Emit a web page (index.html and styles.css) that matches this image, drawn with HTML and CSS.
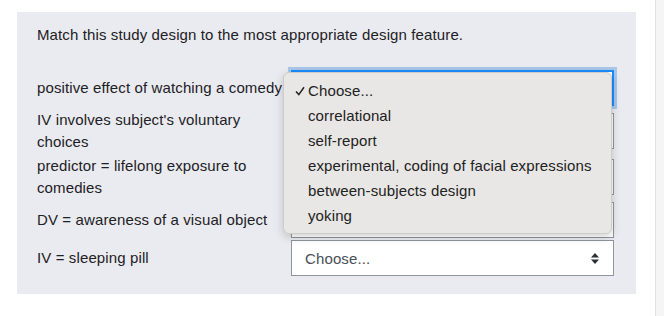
FILE: index.html
```html
<!DOCTYPE html>
<html>
<head>
    <title>Match question</title>
    <link rel="stylesheet" href="styles.css">
</head>
<body>
    <div class="page">
        <div class="content">
            <div class="formulation">
                <p class="prompt">Match this study design to the most appropriate design feature.</p>
                <div class="answers">
                    <div class="stem">positive effect of watching a comedy</div>
                    <div class="control">
                        <div class="select focused">
                            <span>Choose...</span>
                        </div>
                        <!-- open menu -->
                        <ul class="menu">
                            <li class="checked">
                                <svg class="tick" width="10" height="10" viewBox="0 0 10 10">
                                    <path d="M1 5.6 L3.8 8.6 L9 1.2" fill="none" stroke="#222" stroke-width="1.5"/>
                                </svg>Choose...</li>
                            <li>correlational</li>
                            <li>self-report</li>
                            <li>experimental, coding of facial expressions</li>
                            <li>between-subjects design</li>
                            <li>yoking</li>
                        </ul>
                    </div>

                    <div class="stem">IV involves subject's voluntary choices</div>
                    <div class="control">
                        <div class="select"><span>Choose...</span></div>
                    </div>

                    <div class="stem">predictor = lifelong exposure to comedies</div>
                    <div class="control">
                        <div class="select"><span>Choose...</span></div>
                    </div>

                    <div class="stem">DV = awareness of a visual object</div>
                    <div class="control">
                        <div class="select"><span>Choose...</span></div>
                    </div>

                    <div class="stem">IV = sleeping pill</div>
                    <div class="control">
                        <div class="select">
                            <span>Choose...</span>
                            <svg class="arrows" width="8" height="11" viewBox="0 0 8 11">
                                <path d="M4 0 L8 4.5 L0 4.5 Z" fill="#2b2e33"/>
                                <path d="M0 6.5 L8 6.5 L4 11 Z" fill="#2b2e33"/>
                            </svg>
                        </div>
                    </div>
                </div>
            </div>
        </div>
        <div class="scrollbar"></div>
    </div>
</body>
</html>
```

FILE: styles.css
```css
body {
    margin: 0;
    background-color: #ffffff;
    font-family: "Liberation Sans", Arial, sans-serif;
    font-size: 15px;
    letter-spacing: 0.12px;
    color: #1d2125;
}
.page {
    display: flex;
    height: 316px;
}
.content {
    width: 655px;
    padding: 12px 0 0 17px;
    box-sizing: border-box;
}
.scrollbar {
    flex: 1;
    background-color: #f5f5f5;
    border-left: 1px solid #e2e2e2;
}
.formulation {
    width: 619px;
    box-sizing: border-box;
    background-color: #eaebf0;
    padding: 12px 22px 18px 20px;
}
.prompt {
    margin: 0 0 24px 0;
    line-height: 22px;
}
.answers {
    display: grid;
    grid-template-columns: 254px 323px;
    row-gap: 2.5px;
    align-items: center;
}
.stem {
    line-height: 22px;
    padding-right: 4px;
}
.control {
    position: relative;
}
.select {
    height: 36px;
    box-sizing: border-box;
    border: 1px solid #8f959e;
    background-color: #ffffff;
    display: flex;
    align-items: center;
    justify-content: space-between;
    padding: 0 14px 0 13px;
    color: #495057;
}
.select.focused {
    border-color: #1a8cff;
    box-shadow: inset 0 0 0 1px #1a8cff, 0 0 0 3px #a9c6e8;
}
.menu {
    position: absolute;
    left: -8px;
    top: 2px;
    width: 329px;
    margin: 0;
    padding: 5px 0;
    list-style: none;
    box-sizing: border-box;
    background-color: #e8e7e5;
    border: 1px solid #cdcccb;
    border-radius: 6px;
    box-shadow: 0 3px 10px rgba(0, 0, 0, 0.18);
    z-index: 2;
}
.menu li {
    line-height: 25px;
    padding-left: 24px;
    color: #222222;
    position: relative;
}
.tick {
    position: absolute;
    left: 11px;
    top: 8px;
}
```
